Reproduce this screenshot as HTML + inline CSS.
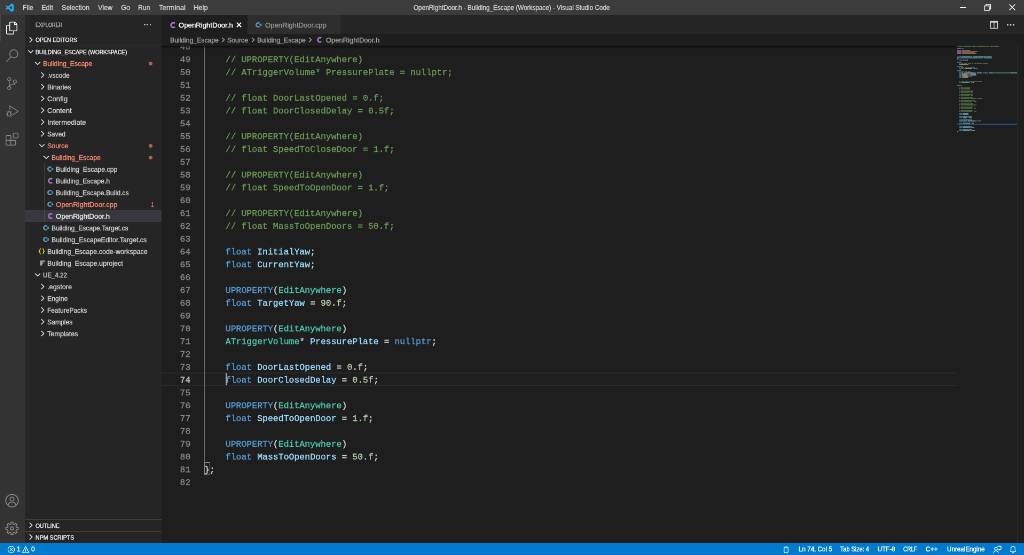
<!DOCTYPE html>
<html><head><meta charset="utf-8"><title>OpenRightDoor.h - Building_Escape (Workspace) - Visual Studio Code</title>
<style>
html,body{margin:0;padding:0;background:#161616;overflow:hidden;width:1024px;height:555px}
#app{position:absolute;left:0;top:0;width:1920px;height:1040px;transform:scale(0.534) translate(-1.47px,-1.46px);transform-origin:0 0;will-change:transform;font-family:"Liberation Sans",sans-serif;font-size:13px;color:#ccc;overflow:hidden;background:#1e1e1e}
#app div,#app span{box-sizing:border-box}
.menu,.st,.tl,.bt,.hd,.pt,.lbl{transform-origin:0 50%;display:block;-webkit-text-stroke:0.400px currentColor}
.abs{position:absolute}
/* title bar */
#title{position:absolute;left:0;top:0;width:1920px;height:30px;background:#3c3c3c;color:#ccc}
#title .menu{position:absolute;top:0;height:30px;line-height:32px;white-space:nowrap;color:#cccccc}
.wc{position:absolute;top:0;width:46px;height:30px}
.wc svg{position:absolute;left:18px;top:10px;width:10px;height:10px;overflow:visible}
/* activity bar */
#act{position:absolute;left:0;top:30px;width:48px;height:988px;background:#333}
#act .ai{position:absolute;left:0;width:48px;height:48px;color:#858585}
#act .ai svg{position:absolute;left:12px;top:12px;width:24px;height:24px;overflow:visible}
#act .ai.on{color:#fff}
#act .ai.on:before{content:"";position:absolute;left:0;top:0;width:2px;height:48px;background:#fff}
/* sidebar */
#side{position:absolute;left:48px;top:30px;width:256px;height:988px;background:#252526;overflow:hidden}
#side .hd{position:absolute;top:0;height:35px;line-height:36px;color:#bbbbbb;white-space:nowrap}
#side .dots{position:absolute;left:223px;top:16.300px;width:14px;height:4px}
#side .dots i{position:absolute;top:0;width:2.800px;height:2.800px;border-radius:50%;background:#c5c5c5}
.pane{position:absolute;left:0;width:256px;height:22px;line-height:23px;color:#f0f0f0;-webkit-text-stroke:0.200px currentColor;white-space:nowrap}
.pane .tw{position:absolute;left:3px;top:3px;width:16px;height:16px;color:#dddddd}
.pane .pt{position:absolute;top:0;line-height:inherit}
.row{position:absolute;left:0;width:256px;height:22px;line-height:22px;color:#cccccc;white-space:nowrap}
.row.sel{background:#37373d;color:#e8e8e8}
.row.err{color:#f48771}
.row .lbl{position:absolute;top:1px;font-size:13px;line-height:22px}
.row .twx{position:absolute;top:3px;width:16px;height:16px;color:#d8d8d8}
.tw{width:16px;height:16px;display:block}
.row .fix{position:absolute;top:3px;width:16px;height:16px}
.fix svg{position:absolute;left:0;top:0;width:16px;height:16px;overflow:visible}
.row .dot{position:absolute;left:232px;top:8px;width:7px;height:7px;border-radius:50%;background:#b0604f}
.row .bdg{position:absolute;left:235.500px;top:1px;font-size:12px;color:#f48771}
.guide{position:absolute;width:1px;background:#6a6a6a}
/* tabs */
#tabs{position:absolute;left:304px;top:30px;width:1616px;height:35px;background:#252526}
.tab{position:absolute;top:0;height:35px}
.tl{position:absolute;top:0;height:35px;line-height:37px;white-space:nowrap}
/* breadcrumbs */
#bc{position:absolute;left:304px;top:65px;width:1616px;height:22px;background:#1e1e1e;color:#a0a0a0;white-space:nowrap}
#bc .bt{position:absolute;top:0;height:22px;line-height:24px}
#bc svg.sep{position:absolute;top:3px;width:16px;height:16px;color:#a0a0a0}
/* editor */
#ed{position:absolute;left:304px;top:87px;width:1616px;height:931px;background:#1e1e1e;overflow:hidden;font-family:"Liberation Mono",monospace}
.ln{-webkit-text-stroke:0.450px currentColor;position:absolute;left:0;width:54.3px;text-align:right;height:24px;line-height:24px;font-size:16.4px;color:#858585;letter-spacing:0.06px}
.ln.cur{color:#c6c6c6}
.cl{-webkit-text-stroke:0.400px currentColor;position:absolute;height:24px;line-height:24px;font-size:16.4px;letter-spacing:0.058px;white-space:pre;color:#d4d4d4}
.c{color:#6a9955}.k{color:#569cd6}.v{color:#9cdcfe}.n{color:#b5cea8}.t{color:#4ec9b0}.p{color:#d4d4d4}
#mm{position:absolute;left:1490px;top:0;width:112px;height:931px;opacity:.55}
#mm i{position:absolute;height:2px;display:block}
/* status */
#status{position:absolute;left:0;top:1018px;width:1920px;height:22px;background:#007acc;color:#fff;white-space:nowrap}
#status .st{position:absolute;top:0;height:22px;line-height:24px}
#status svg{position:absolute;overflow:visible}
</style></head><body>
<div id="app">
<div id="ed">
<div class="abs" style="left:0;top:612px;width:1490px;height:24.500px;border-top:2px solid #2a2a2a;border-bottom:2px solid #2a2a2a"></div>
<div class="abs" style="left:80px;top:0;width:1px;height:780px;background:#6c6c6c"></div>
<div class="abs" style="left:79.500px;top:780px;width:11px;height:24px;border:1px solid #888;background:rgba(0,100,0,0.1)"></div>
<div class="ln" style="top:-9.4px">48</div>
<div class="ln" style="top:14.6px">49</div>
<div class="cl" style="top:14.6px;left:119.8px"><span class="c">// UPROPERTY(EditAnywhere)</span></div>
<div class="ln" style="top:38.6px">50</div>
<div class="cl" style="top:38.6px;left:119.8px"><span class="c">// ATriggerVolume* PressurePlate = nullptr;</span></div>
<div class="ln" style="top:62.6px">51</div>
<div class="ln" style="top:86.6px">52</div>
<div class="cl" style="top:86.6px;left:119.8px"><span class="c">// float DoorLastOpened = 0.f;</span></div>
<div class="ln" style="top:110.6px">53</div>
<div class="cl" style="top:110.6px;left:119.8px"><span class="c">// float DoorClosedDelay = 0.5f;</span></div>
<div class="ln" style="top:134.6px">54</div>
<div class="ln" style="top:158.6px">55</div>
<div class="cl" style="top:158.6px;left:119.8px"><span class="c">// UPROPERTY(EditAnywhere)</span></div>
<div class="ln" style="top:182.6px">56</div>
<div class="cl" style="top:182.6px;left:119.8px"><span class="c">// float SpeedToCloseDoor = 1.f;</span></div>
<div class="ln" style="top:206.6px">57</div>
<div class="ln" style="top:230.6px">58</div>
<div class="cl" style="top:230.6px;left:119.8px"><span class="c">// UPROPERTY(EditAnywhere)</span></div>
<div class="ln" style="top:254.6px">59</div>
<div class="cl" style="top:254.6px;left:119.8px"><span class="c">// float SpeedToOpenDoor = 1.f;</span></div>
<div class="ln" style="top:278.6px">60</div>
<div class="ln" style="top:302.6px">61</div>
<div class="cl" style="top:302.6px;left:119.8px"><span class="c">// UPROPERTY(EditAnywhere)</span></div>
<div class="ln" style="top:326.6px">62</div>
<div class="cl" style="top:326.6px;left:119.8px"><span class="c">// float MassToOpenDoors = 50.f;</span></div>
<div class="ln" style="top:350.6px">63</div>
<div class="ln" style="top:374.6px">64</div>
<div class="cl" style="top:374.6px;left:119.8px"><span class="k">float</span><span class="p"> </span><span class="v">InitialYaw</span><span class="p">;</span></div>
<div class="ln" style="top:398.6px">65</div>
<div class="cl" style="top:398.6px;left:119.8px"><span class="k">float</span><span class="p"> </span><span class="v">CurrentYaw</span><span class="p">;</span></div>
<div class="ln" style="top:422.6px">66</div>
<div class="ln" style="top:446.6px">67</div>
<div class="cl" style="top:446.6px;left:119.8px"><span class="k">UPROPERTY</span><span class="p">(</span><span class="t">EditAnywhere</span><span class="p">)</span></div>
<div class="ln" style="top:470.6px">68</div>
<div class="cl" style="top:470.6px;left:119.8px"><span class="k">float</span><span class="p"> </span><span class="v">TargetYaw</span><span class="p"> = </span><span class="n">90.f</span><span class="p">;</span></div>
<div class="ln" style="top:494.6px">69</div>
<div class="ln" style="top:518.6px">70</div>
<div class="cl" style="top:518.6px;left:119.8px"><span class="k">UPROPERTY</span><span class="p">(</span><span class="t">EditAnywhere</span><span class="p">)</span></div>
<div class="ln" style="top:542.6px">71</div>
<div class="cl" style="top:542.6px;left:119.8px"><span class="t">ATriggerVolume</span><span class="p">* </span><span class="v">PressurePlate</span><span class="p"> = </span><span class="k">nullptr</span><span class="p">;</span></div>
<div class="ln" style="top:566.6px">72</div>
<div class="ln" style="top:590.6px">73</div>
<div class="cl" style="top:590.6px;left:119.8px"><span class="k">float</span><span class="p"> </span><span class="v">DoorLastOpened</span><span class="p"> = </span><span class="n">0.f</span><span class="p">;</span></div>
<div class="ln cur" style="top:614.6px">74</div>
<div class="cl" style="top:614.6px;left:119.8px"><span class="k">float</span><span class="p"> </span><span class="v">DoorClosedDelay</span><span class="p"> = </span><span class="n">0.5f</span><span class="p">;</span></div>
<div class="ln" style="top:638.6px">75</div>
<div class="ln" style="top:662.6px">76</div>
<div class="cl" style="top:662.6px;left:119.8px"><span class="k">UPROPERTY</span><span class="p">(</span><span class="t">EditAnywhere</span><span class="p">)</span></div>
<div class="ln" style="top:686.6px">77</div>
<div class="cl" style="top:686.6px;left:119.8px"><span class="k">float</span><span class="p"> </span><span class="v">SpeedToOpenDoor</span><span class="p"> = </span><span class="n">1.f</span><span class="p">;</span></div>
<div class="ln" style="top:710.6px">78</div>
<div class="ln" style="top:734.6px">79</div>
<div class="cl" style="top:734.6px;left:119.8px"><span class="k">UPROPERTY</span><span class="p">(</span><span class="t">EditAnywhere</span><span class="p">)</span></div>
<div class="ln" style="top:758.6px">80</div>
<div class="cl" style="top:758.6px;left:119.8px"><span class="k">float</span><span class="p"> </span><span class="v">MassToOpenDoors</span><span class="p"> = </span><span class="n">50.f</span><span class="p">;</span></div>
<div class="ln" style="top:782.6px">81</div>
<div class="cl" style="top:782.6px;left:80.2px"><span class="p">};</span></div>
<div class="ln" style="top:806.6px">82</div>
<div class="abs" style="left:119.500px;top:613px;width:2px;height:23px;background:#aeafad"></div>
<div id="mm"><i style="left:0px;top:0px;width:2px;background:#6a9955"></i><i style="left:3px;top:0px;width:4px;background:#6a9955"></i><i style="left:8px;top:0px;width:3px;background:#6a9955"></i><i style="left:12px;top:0px;width:4px;background:#6a9955"></i><i style="left:17px;top:0px;width:9px;background:#6a9955"></i><i style="left:27px;top:0px;width:6px;background:#6a9955"></i><i style="left:34px;top:0px;width:2px;background:#6a9955"></i><i style="left:37px;top:0px;width:3px;background:#6a9955"></i><i style="left:41px;top:0px;width:11px;background:#6a9955"></i><i style="left:53px;top:0px;width:4px;background:#6a9955"></i><i style="left:58px;top:0px;width:2px;background:#6a9955"></i><i style="left:61px;top:0px;width:7px;background:#6a9955"></i><i style="left:69px;top:0px;width:9px;background:#6a9955"></i><i style="left:0px;top:4px;width:7px;background:#c586c0"></i><i style="left:8px;top:4px;width:4px;background:#569cd6"></i><i style="left:0px;top:8px;width:8px;background:#c586c0"></i><i style="left:9px;top:8px;width:15px;background:#ce9178"></i><i style="left:0px;top:10px;width:8px;background:#c586c0"></i><i style="left:9px;top:10px;width:29px;background:#ce9178"></i><i style="left:0px;top:12px;width:8px;background:#c586c0"></i><i style="left:9px;top:12px;width:24px;background:#ce9178"></i><i style="left:0px;top:14px;width:8px;background:#c586c0"></i><i style="left:9px;top:14px;width:27px;background:#ce9178"></i><i style="left:0px;top:20px;width:6px;background:#569cd6"></i><i style="left:6px;top:20px;width:1px;background:#d4d4d4"></i><i style="left:8px;top:20px;width:10px;background:#9cdcfe"></i><i style="left:18px;top:20px;width:2px;background:#d4d4d4"></i><i style="left:20px;top:20px;width:6px;background:#9cdcfe"></i><i style="left:26px;top:20px;width:2px;background:#d4d4d4"></i><i style="left:29px;top:20px;width:4px;background:#9cdcfe"></i><i style="left:33px;top:20px;width:2px;background:#d4d4d4"></i><i style="left:35px;top:20px;width:27px;background:#9cdcfe"></i><i style="left:62px;top:20px;width:1px;background:#d4d4d4"></i><i style="left:64px;top:20px;width:1px;background:#d4d4d4"></i><i style="left:0px;top:22px;width:5px;background:#569cd6"></i><i style="left:6px;top:22px;width:19px;background:#569cd6"></i><i style="left:26px;top:22px;width:14px;background:#4ec9b0"></i><i style="left:41px;top:22px;width:1px;background:#d4d4d4"></i><i style="left:43px;top:22px;width:6px;background:#569cd6"></i><i style="left:50px;top:22px;width:15px;background:#4ec9b0"></i><i style="left:0px;top:24px;width:1px;background:#d4d4d4"></i><i style="left:4px;top:26px;width:14px;background:#569cd6"></i><i style="left:18px;top:26px;width:2px;background:#d4d4d4"></i><i style="left:0px;top:30px;width:6px;background:#569cd6"></i><i style="left:6px;top:30px;width:1px;background:#d4d4d4"></i><i style="left:4px;top:32px;width:2px;background:#6a9955"></i><i style="left:7px;top:32px;width:4px;background:#6a9955"></i><i style="left:12px;top:32px;width:7px;background:#6a9955"></i><i style="left:20px;top:32px;width:6px;background:#6a9955"></i><i style="left:27px;top:32px;width:3px;background:#6a9955"></i><i style="left:31px;top:32px;width:4px;background:#6a9955"></i><i style="left:36px;top:32px;width:11px;background:#6a9955"></i><i style="left:48px;top:32px;width:10px;background:#6a9955"></i><i style="left:4px;top:34px;width:14px;background:#dcdcaa"></i><i style="left:18px;top:34px;width:3px;background:#d4d4d4"></i><i style="left:0px;top:38px;width:9px;background:#569cd6"></i><i style="left:9px;top:38px;width:1px;background:#d4d4d4"></i><i style="left:4px;top:40px;width:2px;background:#6a9955"></i><i style="left:7px;top:40px;width:6px;background:#6a9955"></i><i style="left:14px;top:40px;width:4px;background:#6a9955"></i><i style="left:19px;top:40px;width:3px;background:#6a9955"></i><i style="left:23px;top:40px;width:4px;background:#6a9955"></i><i style="left:28px;top:40px;width:6px;background:#6a9955"></i><i style="left:4px;top:42px;width:7px;background:#569cd6"></i><i style="left:12px;top:42px;width:4px;background:#569cd6"></i><i style="left:17px;top:42px;width:9px;background:#dcdcaa"></i><i style="left:26px;top:42px;width:2px;background:#d4d4d4"></i><i style="left:29px;top:42px;width:8px;background:#569cd6"></i><i style="left:37px;top:42px;width:1px;background:#d4d4d4"></i><i style="left:0px;top:46px;width:6px;background:#569cd6"></i><i style="left:6px;top:46px;width:1px;background:#d4d4d4"></i><i style="left:4px;top:48px;width:2px;background:#6a9955"></i><i style="left:7px;top:48px;width:6px;background:#6a9955"></i><i style="left:14px;top:48px;width:5px;background:#6a9955"></i><i style="left:20px;top:48px;width:5px;background:#6a9955"></i><i style="left:4px;top:50px;width:7px;background:#569cd6"></i><i style="left:12px;top:50px;width:4px;background:#569cd6"></i><i style="left:17px;top:50px;width:13px;background:#dcdcaa"></i><i style="left:30px;top:50px;width:1px;background:#d4d4d4"></i><i style="left:31px;top:50px;width:5px;background:#569cd6"></i><i style="left:37px;top:50px;width:9px;background:#9cdcfe"></i><i style="left:46px;top:50px;width:1px;background:#d4d4d4"></i><i style="left:48px;top:50px;width:10px;background:#4ec9b0"></i><i style="left:59px;top:50px;width:8px;background:#9cdcfe"></i><i style="left:67px;top:50px;width:1px;background:#d4d4d4"></i><i style="left:69px;top:50px;width:27px;background:#4ec9b0"></i><i style="left:96px;top:50px;width:1px;background:#d4d4d4"></i><i style="left:98px;top:50px;width:14px;background:#9cdcfe"></i><i style="left:4px;top:52px;width:4px;background:#569cd6"></i><i style="left:9px;top:52px;width:8px;background:#dcdcaa"></i><i style="left:17px;top:52px;width:1px;background:#d4d4d4"></i><i style="left:18px;top:52px;width:5px;background:#569cd6"></i><i style="left:24px;top:52px;width:9px;background:#9cdcfe"></i><i style="left:33px;top:52px;width:2px;background:#d4d4d4"></i><i style="left:4px;top:54px;width:4px;background:#569cd6"></i><i style="left:9px;top:54px;width:9px;background:#dcdcaa"></i><i style="left:18px;top:54px;width:1px;background:#d4d4d4"></i><i style="left:19px;top:54px;width:5px;background:#569cd6"></i><i style="left:25px;top:54px;width:9px;background:#9cdcfe"></i><i style="left:34px;top:54px;width:2px;background:#d4d4d4"></i><i style="left:4px;top:56px;width:5px;background:#569cd6"></i><i style="left:10px;top:56px;width:9px;background:#dcdcaa"></i><i style="left:19px;top:56px;width:2px;background:#d4d4d4"></i><i style="left:22px;top:56px;width:5px;background:#569cd6"></i><i style="left:27px;top:56px;width:1px;background:#d4d4d4"></i><i style="left:4px;top:58px;width:4px;background:#569cd6"></i><i style="left:9px;top:58px;width:9px;background:#dcdcaa"></i><i style="left:18px;top:58px;width:3px;background:#d4d4d4"></i><i style="left:4px;top:66px;width:2px;background:#6a9955"></i><i style="left:7px;top:66px;width:6px;background:#6a9955"></i><i style="left:14px;top:66px;width:7px;background:#6a9955"></i><i style="left:22px;top:66px;width:3px;background:#6a9955"></i><i style="left:26px;top:66px;width:5px;background:#6a9955"></i><i style="left:32px;top:66px;width:3px;background:#6a9955"></i><i style="left:36px;top:66px;width:4px;background:#6a9955"></i><i style="left:41px;top:66px;width:6px;background:#6a9955"></i><i style="left:4px;top:68px;width:4px;background:#569cd6"></i><i style="left:9px;top:68px;width:13px;background:#9cdcfe"></i><i style="left:23px;top:68px;width:1px;background:#d4d4d4"></i><i style="left:25px;top:68px;width:5px;background:#569cd6"></i><i style="left:30px;top:68px;width:1px;background:#d4d4d4"></i><i style="left:0px;top:74px;width:7px;background:#569cd6"></i><i style="left:7px;top:74px;width:1px;background:#d4d4d4"></i><i style="left:4px;top:78px;width:2px;background:#6a9955"></i><i style="left:7px;top:78px;width:5px;background:#6a9955"></i><i style="left:13px;top:78px;width:11px;background:#6a9955"></i><i style="left:4px;top:80px;width:2px;background:#6a9955"></i><i style="left:7px;top:80px;width:5px;background:#6a9955"></i><i style="left:13px;top:80px;width:11px;background:#6a9955"></i><i style="left:4px;top:84px;width:2px;background:#6a9955"></i><i style="left:7px;top:84px;width:23px;background:#6a9955"></i><i style="left:4px;top:86px;width:2px;background:#6a9955"></i><i style="left:7px;top:86px;width:5px;background:#6a9955"></i><i style="left:13px;top:86px;width:9px;background:#6a9955"></i><i style="left:23px;top:86px;width:1px;background:#6a9955"></i><i style="left:25px;top:86px;width:5px;background:#6a9955"></i><i style="left:4px;top:90px;width:2px;background:#6a9955"></i><i style="left:7px;top:90px;width:23px;background:#6a9955"></i><i style="left:4px;top:92px;width:2px;background:#6a9955"></i><i style="left:7px;top:92px;width:5px;background:#6a9955"></i><i style="left:13px;top:92px;width:9px;background:#6a9955"></i><i style="left:23px;top:92px;width:1px;background:#6a9955"></i><i style="left:25px;top:92px;width:5px;background:#6a9955"></i><i style="left:4px;top:96px;width:2px;background:#6a9955"></i><i style="left:7px;top:96px;width:23px;background:#6a9955"></i><i style="left:4px;top:98px;width:2px;background:#6a9955"></i><i style="left:7px;top:98px;width:15px;background:#6a9955"></i><i style="left:23px;top:98px;width:13px;background:#6a9955"></i><i style="left:37px;top:98px;width:1px;background:#6a9955"></i><i style="left:39px;top:98px;width:8px;background:#6a9955"></i><i style="left:4px;top:102px;width:2px;background:#6a9955"></i><i style="left:7px;top:102px;width:5px;background:#6a9955"></i><i style="left:13px;top:102px;width:14px;background:#6a9955"></i><i style="left:28px;top:102px;width:1px;background:#6a9955"></i><i style="left:30px;top:102px;width:4px;background:#6a9955"></i><i style="left:4px;top:104px;width:2px;background:#6a9955"></i><i style="left:7px;top:104px;width:5px;background:#6a9955"></i><i style="left:13px;top:104px;width:15px;background:#6a9955"></i><i style="left:29px;top:104px;width:1px;background:#6a9955"></i><i style="left:31px;top:104px;width:5px;background:#6a9955"></i><i style="left:4px;top:108px;width:2px;background:#6a9955"></i><i style="left:7px;top:108px;width:23px;background:#6a9955"></i><i style="left:4px;top:110px;width:2px;background:#6a9955"></i><i style="left:7px;top:110px;width:5px;background:#6a9955"></i><i style="left:13px;top:110px;width:16px;background:#6a9955"></i><i style="left:30px;top:110px;width:1px;background:#6a9955"></i><i style="left:32px;top:110px;width:4px;background:#6a9955"></i><i style="left:4px;top:114px;width:2px;background:#6a9955"></i><i style="left:7px;top:114px;width:23px;background:#6a9955"></i><i style="left:4px;top:116px;width:2px;background:#6a9955"></i><i style="left:7px;top:116px;width:5px;background:#6a9955"></i><i style="left:13px;top:116px;width:15px;background:#6a9955"></i><i style="left:29px;top:116px;width:1px;background:#6a9955"></i><i style="left:31px;top:116px;width:4px;background:#6a9955"></i><i style="left:4px;top:120px;width:2px;background:#6a9955"></i><i style="left:7px;top:120px;width:23px;background:#6a9955"></i><i style="left:4px;top:122px;width:2px;background:#6a9955"></i><i style="left:7px;top:122px;width:5px;background:#6a9955"></i><i style="left:13px;top:122px;width:15px;background:#6a9955"></i><i style="left:29px;top:122px;width:1px;background:#6a9955"></i><i style="left:31px;top:122px;width:5px;background:#6a9955"></i><i style="left:4px;top:126px;width:5px;background:#569cd6"></i><i style="left:10px;top:126px;width:10px;background:#9cdcfe"></i><i style="left:20px;top:126px;width:1px;background:#d4d4d4"></i><i style="left:4px;top:128px;width:5px;background:#569cd6"></i><i style="left:10px;top:128px;width:10px;background:#9cdcfe"></i><i style="left:20px;top:128px;width:1px;background:#d4d4d4"></i><i style="left:4px;top:132px;width:9px;background:#569cd6"></i><i style="left:13px;top:132px;width:1px;background:#d4d4d4"></i><i style="left:14px;top:132px;width:12px;background:#4ec9b0"></i><i style="left:26px;top:132px;width:1px;background:#d4d4d4"></i><i style="left:4px;top:134px;width:5px;background:#569cd6"></i><i style="left:10px;top:134px;width:9px;background:#9cdcfe"></i><i style="left:20px;top:134px;width:1px;background:#d4d4d4"></i><i style="left:22px;top:134px;width:4px;background:#b5cea8"></i><i style="left:26px;top:134px;width:1px;background:#d4d4d4"></i><i style="left:4px;top:138px;width:9px;background:#569cd6"></i><i style="left:13px;top:138px;width:1px;background:#d4d4d4"></i><i style="left:14px;top:138px;width:12px;background:#4ec9b0"></i><i style="left:26px;top:138px;width:1px;background:#d4d4d4"></i><i style="left:4px;top:140px;width:14px;background:#4ec9b0"></i><i style="left:18px;top:140px;width:1px;background:#d4d4d4"></i><i style="left:20px;top:140px;width:13px;background:#9cdcfe"></i><i style="left:34px;top:140px;width:1px;background:#d4d4d4"></i><i style="left:36px;top:140px;width:7px;background:#569cd6"></i><i style="left:43px;top:140px;width:1px;background:#d4d4d4"></i><i style="left:4px;top:144px;width:5px;background:#569cd6"></i><i style="left:10px;top:144px;width:14px;background:#9cdcfe"></i><i style="left:25px;top:144px;width:1px;background:#d4d4d4"></i><i style="left:27px;top:144px;width:3px;background:#b5cea8"></i><i style="left:30px;top:144px;width:1px;background:#d4d4d4"></i><i style="left:4px;top:146px;width:5px;background:#569cd6"></i><i style="left:10px;top:146px;width:15px;background:#9cdcfe"></i><i style="left:26px;top:146px;width:1px;background:#d4d4d4"></i><i style="left:28px;top:146px;width:4px;background:#b5cea8"></i><i style="left:32px;top:146px;width:1px;background:#d4d4d4"></i><i style="left:4px;top:150px;width:9px;background:#569cd6"></i><i style="left:13px;top:150px;width:1px;background:#d4d4d4"></i><i style="left:14px;top:150px;width:12px;background:#4ec9b0"></i><i style="left:26px;top:150px;width:1px;background:#d4d4d4"></i><i style="left:4px;top:152px;width:5px;background:#569cd6"></i><i style="left:10px;top:152px;width:15px;background:#9cdcfe"></i><i style="left:26px;top:152px;width:1px;background:#d4d4d4"></i><i style="left:28px;top:152px;width:3px;background:#b5cea8"></i><i style="left:31px;top:152px;width:1px;background:#d4d4d4"></i><i style="left:4px;top:156px;width:9px;background:#569cd6"></i><i style="left:13px;top:156px;width:1px;background:#d4d4d4"></i><i style="left:14px;top:156px;width:12px;background:#4ec9b0"></i><i style="left:26px;top:156px;width:1px;background:#d4d4d4"></i><i style="left:4px;top:158px;width:5px;background:#569cd6"></i><i style="left:10px;top:158px;width:15px;background:#9cdcfe"></i><i style="left:26px;top:158px;width:1px;background:#d4d4d4"></i><i style="left:28px;top:158px;width:4px;background:#b5cea8"></i><i style="left:32px;top:158px;width:1px;background:#d4d4d4"></i><i style="left:0px;top:160px;width:2px;background:#d4d4d4"></i></div>
<div class="abs" style="left:1602px;top:0;width:1px;height:931px;background:#303030"></div>
<div class="abs" style="left:0;top:0;width:1490px;height:6px;background:linear-gradient(#000 0,rgba(0,0,0,0) 100%);opacity:.6"></div>
<div class="abs" style="left:1490px;top:146px;width:112px;height:2px;background:#264f78"></div>
</div>
<div id="bc">
<span class="bt" style="left:16.1px;font-size:13px;transform:scaleX(0.9383);">Building_Escape</span>
<span class="bt" style="left:123.3px;font-size:13px;transform:scaleX(0.9478);">Source</span>
<span class="bt" style="left:178.9px;font-size:13px;transform:scaleX(0.9363);">Building_Escape</span>
<span class="bt" style="left:308.0px;font-size:13px;transform:scaleX(0.9972);">OpenRightDoor.h</span><svg class="sep" style="left:106.9px" viewBox="0 0 16 16"><path d="M6.200 3.800L10.400 8 6.200 12.200" fill="none" stroke="currentColor" stroke-width="1.700"/></svg><svg class="sep" style="left:162.9px" viewBox="0 0 16 16"><path d="M6.200 3.800L10.400 8 6.200 12.200" fill="none" stroke="currentColor" stroke-width="1.700"/></svg><svg class="sep" style="left:269.7px" viewBox="0 0 16 16"><path d="M6.200 3.800L10.400 8 6.200 12.200" fill="none" stroke="currentColor" stroke-width="1.700"/></svg><svg class="sep" style="left:288.6px" viewBox="0 0 16 16"><path d="M10.300 4.900A4.100 4.100 0 1 0 10.300 11.100" stroke="#a074c4" stroke-width="2.900" fill="none"/></svg>
</div>
<div id="tabs">
<div class="abs" style="left:-4px;top:-10px;width:1624px;height:45px;background:#252526"></div>
<div class="tab" style="left:-4px;top:-10px;height:45px;width:165px;background:#1e1e1e"></div>
<div class="tab" style="left:161px;top:-10px;height:45px;width:174px;background:#2d2d2d"></div>
<span class="tl" style="left:31.8px;font-size:13px;transform:scaleX(1.0131);color:#fff;">OpenRightDoor.h</span><span class="tl" style="left:193.8px;font-size:13px;transform:scaleX(1.0059);color:#969696;">OpenRightDoor.cpp</span>
<svg class="abs" style="left:13.500px;top:9.500px;width:17px;height:17px" viewBox="0 0 16 16"><path d="M10.300 4.900A4.100 4.100 0 1 0 10.300 11.100" stroke="#a074c4" stroke-width="2.900" fill="none"/></svg>
<svg class="abs" style="left:137px;top:10px;width:16px;height:16px" viewBox="0 0 16 16"><path d="M3.800 3.800l8.400 8.400M12.200 3.800l-8.400 8.400" stroke="#ffffff" stroke-width="2" fill="none"/></svg>
<svg class="abs" style="left:175.300px;top:10px;width:16px;height:16px" viewBox="0 0 16 16"><path d="M8.600 5.300A3.700 3.700 0 1 0 8.600 10.700" stroke="#519aba" stroke-width="2.700" fill="none"/><path d="M8.200 8h5.200M10.800 5.700v4.600" stroke="#519aba" stroke-width="1.700" fill="none"/></svg>
<svg class="abs" style="left:1551px;top:9.500px;width:16px;height:16px" viewBox="0 0 16 16"><path d="M1.500 1.500h13v13h-13zM8 1.500v13" stroke="#d0d0d0" stroke-width="1.400" fill="none"/><path d="M2 2h12v1.800H2z" fill="#d0d0d0"/></svg>
<svg class="abs" style="left:1582px;top:9.500px;width:16px;height:16px" viewBox="0 0 16 16"><circle cx="2.500" cy="8" r="1.500" fill="#e0e0e0"/><circle cx="8" cy="8" r="1.500" fill="#e0e0e0"/><circle cx="13.500" cy="8" r="1.500" fill="#e0e0e0"/></svg>

</div>
<div class="abs" style="left:40px;top:20px;width:264px;height:1012px;background:#252526"></div>
<div id="side">
<span class="hd" style="left:20.0px;font-size:11px;transform:scaleX(0.8434);">EXPLORER</span>
<div class="dots"><i style="left:0"></i><i style="left:5.300px"></i><i style="left:10.600px"></i></div>
<div class="pane" style="top:35px"><svg class="tw" viewBox="0 0 16 16"><path d="M5.800 3.200L10.600 8 5.800 12.800" fill="none" stroke="currentColor" stroke-width="1.700"/></svg><span class="pt" style="left:20.0px;font-size:11px;transform:scaleX(0.9393);">OPEN EDITORS</span></div>
<div class="pane" style="top:57px;border-top:1px solid #464646"><svg class="tw" style="top:2px" viewBox="0 0 16 16"><path d="M3.200 5.600L8 10.400 12.800 5.600" fill="none" stroke="currentColor" stroke-width="1.700"/></svg><span class="pt" style="left:20.0px;font-size:11px;transform:scaleX(0.9324);">BUILDING_ESCAPE (WORKSPACE)</span></div>
<div class="row err" style="top:79px"><span class="twx" style="left:16.4px"><svg class="tw" viewBox="0 0 16 16"><path d="M3.200 5.600L8 10.400 12.800 5.600" fill="none" stroke="currentColor" stroke-width="1.700"/></svg></span><span class="lbl" style="left:34.4px;transform:scaleX(0.9507)">Building_Escape</span><span class="dot"></span></div>
<div class="row " style="top:101px"><span class="twx" style="left:25.4px"><svg class="tw" viewBox="0 0 16 16"><path d="M5.800 3.200L10.600 8 5.800 12.800" fill="none" stroke="currentColor" stroke-width="1.700"/></svg></span><span class="lbl" style="left:42.4px;transform:scaleX(0.9316)">.vscode</span></div>
<div class="row " style="top:123px"><span class="twx" style="left:25.4px"><svg class="tw" viewBox="0 0 16 16"><path d="M5.800 3.200L10.600 8 5.800 12.800" fill="none" stroke="currentColor" stroke-width="1.700"/></svg></span><span class="lbl" style="left:42.4px;transform:scaleX(0.9441)">Binaries</span></div>
<div class="row " style="top:145px"><span class="twx" style="left:25.4px"><svg class="tw" viewBox="0 0 16 16"><path d="M5.800 3.200L10.600 8 5.800 12.800" fill="none" stroke="currentColor" stroke-width="1.700"/></svg></span><span class="lbl" style="left:42.4px;transform:scaleX(1.0100)">Config</span></div>
<div class="row " style="top:167px"><span class="twx" style="left:25.4px"><svg class="tw" viewBox="0 0 16 16"><path d="M5.800 3.200L10.600 8 5.800 12.800" fill="none" stroke="currentColor" stroke-width="1.700"/></svg></span><span class="lbl" style="left:42.4px;transform:scaleX(1.0021)">Content</span></div>
<div class="row " style="top:189px"><span class="twx" style="left:25.4px"><svg class="tw" viewBox="0 0 16 16"><path d="M5.800 3.200L10.600 8 5.800 12.800" fill="none" stroke="currentColor" stroke-width="1.700"/></svg></span><span class="lbl" style="left:42.4px;transform:scaleX(1.0048)">Intermediate</span></div>
<div class="row " style="top:211px"><span class="twx" style="left:25.4px"><svg class="tw" viewBox="0 0 16 16"><path d="M5.800 3.200L10.600 8 5.800 12.800" fill="none" stroke="currentColor" stroke-width="1.700"/></svg></span><span class="lbl" style="left:42.4px;transform:scaleX(0.9236)">Saved</span></div>
<div class="row err" style="top:233px"><span class="twx" style="left:24.4px"><svg class="tw" viewBox="0 0 16 16"><path d="M3.200 5.600L8 10.400 12.800 5.600" fill="none" stroke="currentColor" stroke-width="1.700"/></svg></span><span class="lbl" style="left:42.4px;transform:scaleX(0.9526)">Source</span><span class="dot"></span></div>
<div class="row err" style="top:255px"><span class="twx" style="left:32.4px"><svg class="tw" viewBox="0 0 16 16"><path d="M3.200 5.600L8 10.400 12.800 5.600" fill="none" stroke="currentColor" stroke-width="1.700"/></svg></span><span class="lbl" style="left:50.4px;transform:scaleX(0.9486)">Building_Escape</span><span class="dot"></span></div>
<div class="row " style="top:277px"><span class="fix" style="left:41.4px"><svg viewBox="0 0 16 16"><path d="M8.600 5.300A3.700 3.700 0 1 0 8.600 10.700" stroke="#519aba" stroke-width="2.700" fill="none"/><path d="M8.200 8h4.400M10.400 5.900v4.200" stroke="#519aba" stroke-width="1.500" fill="none"/></svg></span><span class="lbl" style="left:58.4px;transform:scaleX(0.9509)">Building_Escape.cpp</span></div>
<div class="row " style="top:299px"><span class="fix" style="left:41.4px"><svg viewBox="0 0 16 16"><path d="M10.300 4.900A4.100 4.100 0 1 0 10.300 11.100" stroke="#a074c4" stroke-width="2.900" fill="none"/></svg></span><span class="lbl" style="left:58.4px;transform:scaleX(0.9384)">Building_Escape.h</span></div>
<div class="row " style="top:321px"><span class="fix" style="left:41.4px"><svg viewBox="0 0 16 16"><path d="M8.600 5.300A3.700 3.700 0 1 0 8.600 10.700" stroke="#519aba" stroke-width="2.700" fill="none"/><path d="M8.800 6.800h3.600M8.800 9.200h3.600M9.900 5.600v4.800M11.400 5.600v4.800" stroke="#519aba" stroke-width="1" fill="none"/></svg></span><span class="lbl" style="left:58.4px;transform:scaleX(0.9352)">Building_Escape.Build.cs</span></div>
<div class="row err" style="top:343px"><span class="fix" style="left:41.4px"><svg viewBox="0 0 16 16"><path d="M8.600 5.300A3.700 3.700 0 1 0 8.600 10.700" stroke="#519aba" stroke-width="2.700" fill="none"/><path d="M8.200 8h4.400M10.400 5.900v4.200" stroke="#519aba" stroke-width="1.500" fill="none"/></svg></span><span class="lbl" style="left:58.4px;transform:scaleX(1.0111)">OpenRightDoor.cpp</span><span class="bdg">1</span></div>
<div class="row sel" style="top:365px"><span class="fix" style="left:41.4px"><svg viewBox="0 0 16 16"><path d="M10.300 4.900A4.100 4.100 0 1 0 10.300 11.100" stroke="#a074c4" stroke-width="2.900" fill="none"/></svg></span><span class="lbl" style="left:58.4px;transform:scaleX(1.0062)">OpenRightDoor.h</span></div>
<div class="row " style="top:387px"><span class="fix" style="left:33.4px"><svg viewBox="0 0 16 16"><path d="M8.600 5.300A3.700 3.700 0 1 0 8.600 10.700" stroke="#519aba" stroke-width="2.700" fill="none"/><path d="M8.800 6.800h3.600M8.800 9.200h3.600M9.900 5.600v4.800M11.400 5.600v4.800" stroke="#519aba" stroke-width="1" fill="none"/></svg></span><span class="lbl" style="left:50.4px;transform:scaleX(0.9375)">Building_Escape.Target.cs</span></div>
<div class="row " style="top:409px"><span class="fix" style="left:33.4px"><svg viewBox="0 0 16 16"><path d="M8.600 5.300A3.700 3.700 0 1 0 8.600 10.700" stroke="#519aba" stroke-width="2.700" fill="none"/><path d="M8.800 6.800h3.600M8.800 9.200h3.600M9.900 5.600v4.800M11.400 5.600v4.800" stroke="#519aba" stroke-width="1" fill="none"/></svg></span><span class="lbl" style="left:50.4px;transform:scaleX(0.9561)">Building_EscapeEditor.Target.cs</span></div>
<div class="row " style="top:431px"><span class="fix" style="left:25.4px"><svg viewBox="0 0 16 16"><path d="M4.600 2.800C3 2.800 3.800 7 1.800 8 3.800 9 3 13.200 4.600 13.200M8.400 2.800C10 2.800 9.200 7 11.200 8 9.200 9 10 13.200 8.400 13.200" stroke="#cbcb41" stroke-width="1.900" fill="none"/></svg></span><span class="lbl" style="left:42.4px;transform:scaleX(0.9623)">Building_Escape.code-workspace</span></div>
<div class="row " style="top:453px"><span class="fix" style="left:25.4px"><svg viewBox="0 0 16 16"><path d="M4 4.500h9M4 8h5.500M4 11.500h3.500M5.200 3.500v9" stroke="#c5c5c5" stroke-width="1.800" fill="none"/></svg></span><span class="lbl" style="left:42.4px;transform:scaleX(0.9666)">Building_Escape.uproject</span></div>
<div class="row " style="top:475px"><span class="twx" style="left:16.4px"><svg class="tw" viewBox="0 0 16 16"><path d="M3.200 5.600L8 10.400 12.800 5.600" fill="none" stroke="currentColor" stroke-width="1.700"/></svg></span><span class="lbl" style="left:34.4px;transform:scaleX(0.8883)">UE_4.22</span></div>
<div class="row " style="top:497px"><span class="twx" style="left:25.4px"><svg class="tw" viewBox="0 0 16 16"><path d="M5.800 3.200L10.600 8 5.800 12.800" fill="none" stroke="currentColor" stroke-width="1.700"/></svg></span><span class="lbl" style="left:42.4px;transform:scaleX(0.9821)">.egstore</span></div>
<div class="row " style="top:519px"><span class="twx" style="left:25.4px"><svg class="tw" viewBox="0 0 16 16"><path d="M5.800 3.200L10.600 8 5.800 12.800" fill="none" stroke="currentColor" stroke-width="1.700"/></svg></span><span class="lbl" style="left:42.4px;transform:scaleX(0.9498)">Engine</span></div>
<div class="row " style="top:541px"><span class="twx" style="left:25.4px"><svg class="tw" viewBox="0 0 16 16"><path d="M5.800 3.200L10.600 8 5.800 12.800" fill="none" stroke="currentColor" stroke-width="1.700"/></svg></span><span class="lbl" style="left:42.4px;transform:scaleX(0.9265)">FeaturePacks</span></div>
<div class="row " style="top:563px"><span class="twx" style="left:25.4px"><svg class="tw" viewBox="0 0 16 16"><path d="M5.800 3.200L10.600 8 5.800 12.800" fill="none" stroke="currentColor" stroke-width="1.700"/></svg></span><span class="lbl" style="left:42.4px;transform:scaleX(0.9380)">Samples</span></div>
<div class="row " style="top:585px"><span class="twx" style="left:25.4px"><svg class="tw" viewBox="0 0 16 16"><path d="M5.800 3.200L10.600 8 5.800 12.800" fill="none" stroke="currentColor" stroke-width="1.700"/></svg></span><span class="lbl" style="left:42.4px;transform:scaleX(0.9726)">Templates</span></div>
<div class="guide" style="left:36.8px;top:277px;height:110px"></div>
<div class="pane" style="top:944px;border-top:1px solid #464646"><svg class="tw" style="top:2px" viewBox="0 0 16 16"><path d="M5.800 3.200L10.600 8 5.800 12.800" fill="none" stroke="currentColor" stroke-width="1.700"/></svg><span class="pt" style="left:20.0px;font-size:11px;transform:scaleX(0.9391);">OUTLINE</span></div>
<div class="pane" style="top:966px;border-top:1px solid #464646"><svg class="tw" style="top:2px" viewBox="0 0 16 16"><path d="M5.800 3.200L10.600 8 5.800 12.800" fill="none" stroke="currentColor" stroke-width="1.700"/></svg><span class="pt" style="left:20.0px;font-size:11px;transform:scaleX(0.9604);">NPM SCRIPTS</span></div>
</div>
<div class="abs" style="left:-2px;top:20px;width:50px;height:1012px;background:#333"></div>
<div id="act">
<div class="ai on" style="top:0"><svg viewBox="0 0 24 24"><path fill="currentColor" d="M17.500 0h-9L7 1.500V6H2.500L1 7.500v15.070L2.500 24h12.070L16 22.570V18h4.700l1.300-1.430V4.500L17.500 0zm0 2.120l2.380 2.380H17.500V2.120zm-3 20.380h-12v-15H7v9.070L8.500 18h6v4.500zm6-6h-12v-15H16V6h4.500v10.500z"/></svg></div>
<div class="ai" style="top:52px"><svg viewBox="0 0 24 24"><path fill="currentColor" d="M15.250 0a8.250 8.250 0 0 0-6.180 13.720L1 22.880l1.120 1 8.050-9.120A8.251 8.251 0 1 0 15.250.010V0zm0 15a6.750 6.750 0 1 1 0-13.500 6.750 6.750 0 0 1 0 13.500z"/></svg></div>
<div class="ai" style="top:104px"><svg viewBox="0 0 24 24"><path fill="currentColor" d="M21.007 8.222A3.738 3.738 0 0 0 15.045 5.200a3.737 3.737 0 0 0 1.156 6.583 2.988 2.988 0 0 1-2.668 1.670h-2.990a4.456 4.456 0 0 0-2.989 1.165V7.400a3.737 3.737 0 1 0-1.494 0v9.117a3.776 3.776 0 1 0 1.816.099 2.990 2.990 0 0 1 2.668-1.667h2.990a4.484 4.484 0 0 0 4.223-3.039 3.736 3.736 0 0 0 3.250-3.687zM4.565 3.738a2.242 2.242 0 1 1 4.484 0 2.242 2.242 0 0 1-4.484 0zm4.484 16.441a2.242 2.242 0 1 1-4.484 0 2.242 2.242 0 0 1 4.484 0zm8.221-9.715a2.242 2.242 0 1 1 0-4.485 2.242 2.242 0 0 1 0 4.485z"/></svg></div>
<div class="ai" style="top:156px"><svg viewBox="0 0 24 24"><g fill="none" stroke="currentColor" stroke-width="1.500"><path d="M8 9.500V1.800L23.300 12 12.600 19.200"/><ellipse cx="6.700" cy="17" rx="3.100" ry="3.900"/><path d="M3.600 17H1M9.800 17h2.600M4 14L2 12.300M9.400 14l2-1.700M4 20l-2 1.700M9.400 20l2 1.700M4.500 12h4.400"/></g></svg></div>
<div class="ai" style="top:208px"><svg viewBox="0 0 24 24"><path fill="currentColor" d="M13.500 1.500L15 0h7.500L24 1.500V9l-1.500 1.500H15L13.500 9V1.500zm1.500 0V9h7.500V1.500H15zM0 15V6l1.500-1.500H9L10.500 6v7.500H18l1.500 1.500v7.500L18 24H1.500L0 22.500V15zm9-1.500V6H1.500v7.500H9zM9 15H1.500v7.500H9V15zm1.500 7.500H18V15h-7.500v7.500z"/></svg></div>
<div class="ai" style="top:885px"><svg viewBox="0 0 24 24"><g fill="none" stroke="currentColor" stroke-width="1.800"><circle cx="12" cy="12" r="11.700"/><circle cx="12" cy="9" r="3.600"/><path d="M4.800 20.200c1-4 4-5.600 7.200-5.600s6.200 1.600 7.200 5.600"/></g></svg></div>
<div class="ai" style="top:937px"><svg viewBox="0 0 24 24"><path d="M10.21 3.59L10.00 0.37L14.00 0.37L13.79 3.59L16.68 4.78L18.81 2.36L21.64 5.19L19.22 7.32L20.41 10.21L23.63 10.00L23.63 14.00L20.41 13.79L19.22 16.68L21.64 18.81L18.81 21.64L16.68 19.22L13.79 20.41L14.00 23.63L10.00 23.63L10.21 20.41L7.32 19.22L5.19 21.64L2.36 18.81L4.78 16.68L3.59 13.79L0.37 14.00L0.37 10.00L3.59 10.21L4.78 7.32L2.36 5.19L5.19 2.36L7.32 4.78Z" fill="none" stroke="currentColor" stroke-width="1.700" stroke-linejoin="round"/><circle cx="12" cy="12" r="2.9" fill="none" stroke="currentColor" stroke-width="1.700"/></svg></div>
</div>
<div id="status">
<span class="st" style="left:33.2px;font-size:12px;transform:scaleX(0.9976);">1</span>
<span class="st" style="left:59.9px;font-size:12px;transform:scaleX(0.9976);">0</span>
<span class="st" style="left:1496.6px;font-size:12px;transform:scaleX(0.9691);">Ln 74, Col 5</span>
<span class="st" style="left:1575.3px;font-size:12px;transform:scaleX(0.9083);">Tab Size: 4</span>
<span class="st" style="left:1645.4px;font-size:12px;transform:scaleX(0.9606);">UTF-8</span>
<span class="st" style="left:1693.3px;font-size:12px;transform:scaleX(0.8317);">CRLF</span>
<span class="st" style="left:1735.3px;font-size:12px;transform:scaleX(1.0037);">C++</span>
<span class="st" style="left:1774.7px;font-size:12px;transform:scaleX(0.9697);">UnrealEngine</span><svg style="left:15.1px;top:4.6px;width:15px;height:15px" viewBox="0 0 16 16"><circle cx="8" cy="8" r="6.500" fill="none" stroke="#fff" stroke-width="1.300"/><path d="M5.500 5.500l5 5M10.500 5.500l-5 5" stroke="#fff" stroke-width="1.300" fill="none"/></svg><svg style="left:41.9px;top:4.6px;width:15px;height:15px" viewBox="0 0 16 16"><path d="M8 2L14.500 14H1.500z" fill="none" stroke="#fff" stroke-width="1.300" stroke-linejoin="round"/><path d="M8 6.500v4M8 11.500v1.200" stroke="#fff" stroke-width="1.300"/></svg><svg style="left:1466.3px;top:4.6px;width:15px;height:15px" viewBox="0 0 16 16"><rect x="4" y="3" width="8" height="11.500" rx="2.500" fill="none" stroke="#fff" stroke-width="1.400"/><path d="M8 1.200v5" stroke="#fff" stroke-width="1.400"/></svg><svg style="left:1860.6px;top:4.6px;width:16px;height:16px" viewBox="0 0 16 16"><circle cx="5.500" cy="6" r="2.600" fill="none" stroke="#fff" stroke-width="1.300"/><path d="M1 14.500c.6-3.400 2.400-4.600 4.500-4.600s3.900 1.200 4.500 4.600" fill="none" stroke="#fff" stroke-width="1.300"/><path d="M8.500 1.500h6.500v5.500h-2l-2 2v-2" fill="none" stroke="#fff" stroke-width="1.300" stroke-linejoin="round"/></svg><svg style="left:1890.7px;top:4.6px;width:15px;height:15px" viewBox="0 0 16 16"><path d="M8 1.800c-2.600 0-4.200 2-4.200 4.400v3.600L2.600 12h10.800l-1.200-2.200V6.200c0-2.400-1.600-4.400-4.200-4.400z" fill="none" stroke="#fff" stroke-width="1.300" stroke-linejoin="round"/><path d="M6.500 13.500a1.500 1.500 0 0 0 3 0" fill="none" stroke="#fff" stroke-width="1.300"/></svg>
</div>
<div id="title">
<svg class="abs" style="left:11.5px;top:8px;width:15.5px;height:15.5px" viewBox="0 0 100 100"><path d="M96.500 10.800L75.900.9c-2.400-1.200-5.200-.7-7.100 1.200L29.400 38 12.200 25c-1.600-1.200-3.800-1.100-5.300.2L1.400 30.200c-1.800 1.600-1.800 4.500 0 6.100L16.300 50 1.400 63.600c-1.800 1.600-1.800 4.500 0 6.100l5.500 5c1.500 1.400 3.700 1.500 5.300.2L29.400 62l39.400 36c1.900 1.900 4.700 2.400 7.100 1.200l20.600-9.900c2.200-1 3.500-3.200 3.500-5.600V16.400c0-2.400-1.400-4.600-3.500-5.600zM75 72.700L45.100 50 75 27.300z" fill="#23a9f2"/></svg>
<span class="menu" style="left:43.6px;font-size:13px;transform:scaleX(0.9390);">File</span>
<span class="menu" style="left:78.7px;font-size:13px;transform:scaleX(0.9851);">Edit</span>
<span class="menu" style="left:116.6px;font-size:13px;transform:scaleX(0.9710);">Selection</span>
<span class="menu" style="left:185.0px;font-size:13px;transform:scaleX(0.9736);">View</span>
<span class="menu" style="left:227.6px;font-size:13px;transform:scaleX(0.9991);">Go</span>
<span class="menu" style="left:260.3px;font-size:13px;transform:scaleX(0.9418);">Run</span>
<span class="menu" style="left:298.8px;font-size:13px;transform:scaleX(1.0186);">Terminal</span>
<span class="menu" style="left:364.3px;font-size:13px;transform:scaleX(0.9969);">Help</span>
<span class="menu" style="left:776.3px;font-size:12px;transform:scaleX(0.9762);">OpenRightDoor.h - Building_Escape (Workspace) - Visual Studio Code</span>
<div class="wc" style="left:1782px"><svg viewBox="0 0 10 10"><path d="M-0.500 5.500h11.500" stroke="#ffffff" stroke-width="1.100" fill="none"/></svg></div>
<div class="wc" style="left:1828px"><svg viewBox="0 0 10 10"><path d="M-0.500 2.500h8.500v8.500h-8.500zM2 2.500v-2.500h8.500v8.500h-2.500" stroke="#ffffff" stroke-width="1.400" fill="none"/></svg></div>
<div class="wc" style="left:1874px"><svg viewBox="0 0 10 10"><path d="M-0.500 -0.500L10.500 10.500M10.500 -0.500L-0.500 10.500" stroke="#ffffff" stroke-width="1.500" fill="none"/></svg></div>
</div>
</div>
</body></html>
